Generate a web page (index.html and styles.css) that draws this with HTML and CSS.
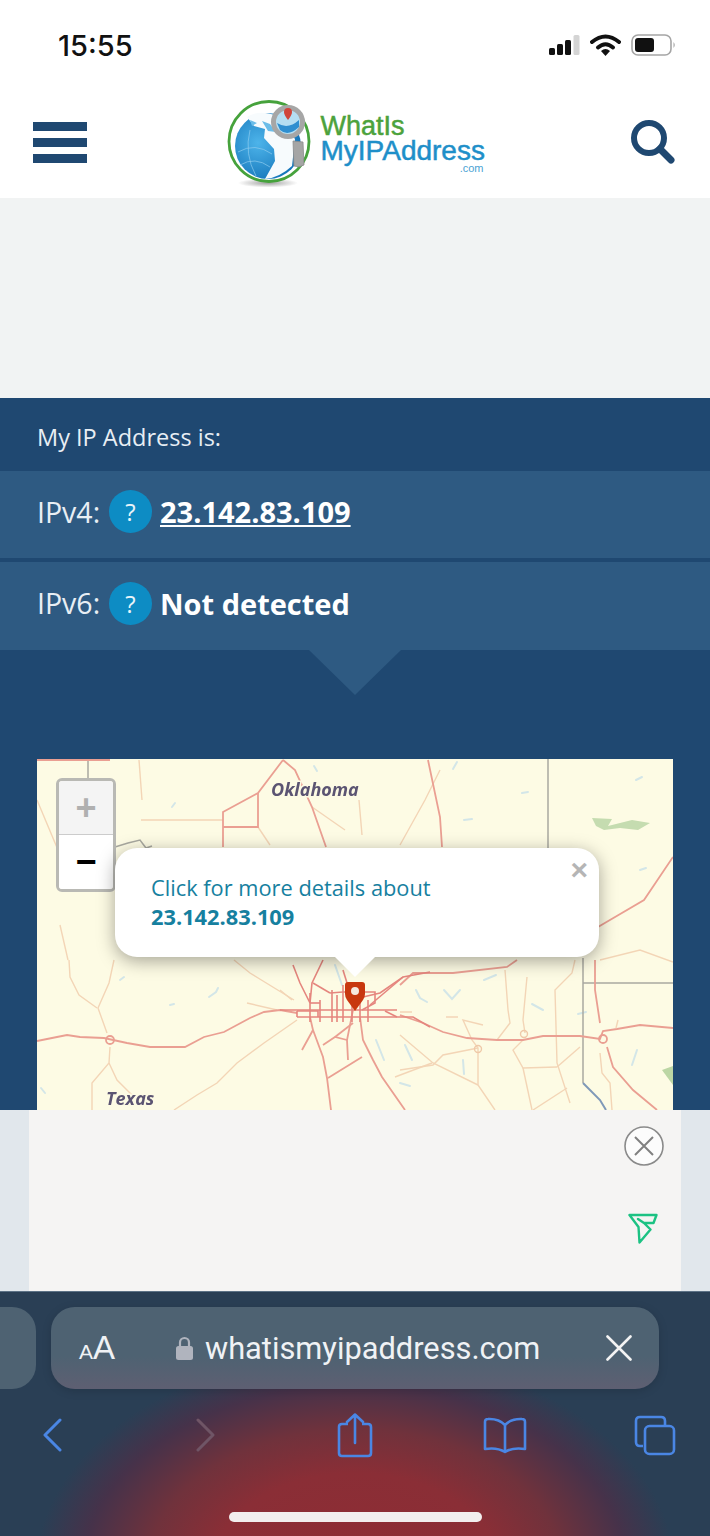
FILE: index.html
```html
<!DOCTYPE html>
<html lang="en">
<head>
  <meta charset="UTF-8" />
  <title>What Is My IP Address</title>
  <link rel="stylesheet" href="styles.css">
</head>
<body>

  <div class="statusbar">
    <div class="clock">15:55</div>
    <div class="status-icons">
      <svg width="32" height="20" viewBox="0 0 32 20">
        <rect x="1" y="13" width="6" height="7" rx="1.5" fill="#111"/>
        <rect x="9" y="9" width="6" height="11" rx="1.5" fill="#111"/>
        <rect x="17" y="5" width="6" height="15" rx="1.5" fill="#111"/>
        <rect x="25.5" y="0" width="6" height="20" rx="1.5" fill="#d4d4d4"/>
      </svg>
      <svg width="31" height="22" viewBox="0 0 31 22">
        <path d="M2 8 Q15.5 -3 29 8" fill="none" stroke="#111" stroke-width="4" stroke-linecap="round"/>
        <path d="M8 13.5 Q15.5 7 23 13.5" fill="none" stroke="#111" stroke-width="4" stroke-linecap="round"/>
        <path d="M11 17 L15.5 22 L20 17 Q15.5 13 11 17 Z" fill="#111"/>
      </svg>
      <svg width="46" height="22" viewBox="0 0 46 22">
        <rect x="1" y="1" width="39" height="20" rx="6" fill="#fff" stroke="#a5a5a5" stroke-width="1.6"/>
        <rect x="4" y="4" width="19" height="14" rx="3" fill="#111"/>
        <path d="M42.5 8 Q45 11 42.5 14 Z" fill="#a5a5a5"/>
      </svg>
    </div>
  </div>

  <div class="appbar">
    <div class="burger"><span></span><span></span><span></span></div>
    <div class="logo">
      <svg class="logo-mark" width="88" height="92" viewBox="226 96 88 92">
        <defs>
          <radialGradient id="globe" cx="35%" cy="45%" r="70%">
            <stop offset="0" stop-color="#4db4ea"/>
            <stop offset="1" stop-color="#0f6fb5"/>
          </radialGradient>
          <radialGradient id="shade">
            <stop offset="0" stop-color="#777" stop-opacity=".7"/>
            <stop offset="1" stop-color="#777" stop-opacity="0"/>
          </radialGradient>
        </defs>
        <ellipse cx="268" cy="181" rx="30" ry="4.5" fill="url(#shade)"/>
        <ellipse cx="269" cy="139.5" rx="40" ry="40" fill="#fff" stroke="#46a23c" stroke-width="2.8"/>
        <circle cx="268" cy="144" r="33" fill="url(#globe)"/>
        <path d="M247 115 Q259 107 277 114 L295 137 L292 164 Q279 176 265 177 L275 159 L274 147 L264 136 L265 127 L254 124 Z" fill="#f7fbfd"/>
        <path d="M262 119 L270 122 L276 130 L268 129 Z M250 118 L257 121 L252 124 Z" fill="#6bbde9"/>
        <g fill="none" stroke="#8ccbef" stroke-width=".7">
          <path d="M238 150 Q255 140 272 152"/>
          <path d="M240 163 Q255 154 270 165"/>
          <path d="M250 128 Q244 152 256 174"/>
        </g>
        <path d="M293 139 L303 140 L304 163 Q299 166 294 164 Z" fill="#a5a5a5" stroke="#8c8c8c" stroke-width=".8"/>
        <circle cx="288" cy="120" r="14.5" fill="#b5def2" stroke="#a6a6a6" stroke-width="5"/>
        <path d="M277 121 Q288 128 299 118 L299 125 Q288 135 280 128 Z" fill="#2f8fd0"/>
        <path d="M288 106 a4 4 0 0 1 4 4 q0 3 -4 8 q-4 -5 -4 -8 a4 4 0 0 1 4 -4 Z" fill="#d0453a"/>
      </svg>
      <div class="logo-text">
        <div class="logo-what">WhatIs</div>
        <div class="logo-my">MyIPAddress</div>
        <div class="logo-com">.com</div>
      </div>
    </div>
    <svg class="search" width="46" height="46" viewBox="0 0 46 46">
      <circle cx="19" cy="19" r="15" fill="none" stroke="#1f4871" stroke-width="6"/>
      <path d="M30 30 L41 41" stroke="#1f4871" stroke-width="7" stroke-linecap="round"/>
    </svg>
  </div>

  <div class="ad-top"></div>

  <div class="hero">
    <div class="hero-title">My IP Address is:</div>
    <div class="ip-row">
      <span class="ip-label">IPv4:</span>
      <span class="help">?</span>
      <a class="ip-value" href="#">23.142.83.109</a>
    </div>
    <div class="ip-row">
      <span class="ip-label">IPv6:</span>
      <span class="help">?</span>
      <span class="ip-value">Not detected</span>
    </div>
    <div class="arrow"></div>

    <div class="map">
      <svg class="map-art" width="636" height="351" viewBox="37 759 636 351">
        <!-- water -->
        <g fill="none" stroke="#d3e6e8" stroke-width="2" stroke-linecap="round">
          <path d="M172 807 L175 803"/>
          <path d="M464 820 L472 819"/>
          <path d="M522 793 L528 792"/>
          <path d="M314 766 L317 771"/>
          <path d="M453 769 L457 762"/>
          <path d="M120 980 L124 977"/>
          <path d="M170 1005 L174 1004"/>
          <path d="M209 997 L216 992 L218 988"/>
          <path d="M41 1088 L45 1093"/>
          <path d="M416 990 L420 998 L427 1002"/>
          <path d="M444 990 L452 999 L460 990"/>
          <path d="M532 1004 L543 1010"/>
          <path d="M578 1014 L586 1012"/>
          <path d="M463 1060 L464 1074"/>
          <path d="M405 1045 L412 1060"/>
          <path d="M400 1083 L410 1086"/>
          <path d="M484 980 L496 975"/>
          <path d="M637 1050 L632 1065"/>
          <path d="M335 965 L342 985"/>
          <path d="M376 1040 L384 1060"/>
          <path d="M640 870 L646 868"/>
          <path d="M636 780 L642 777"/>
        </g>
        <!-- green patches -->
        <path d="M592 818 L612 819 L608 826 L620 823 L632 820 L650 823 L638 830 L620 828 L604 830 L596 826 Z" fill="#c5dcb0"/>
        <path d="M662 1070 L673 1066 V1085 Z" fill="#bcd6a4"/>
        <!-- state lines -->
        <g fill="none" stroke="#a9a9a0" stroke-width="1.5">
          <path d="M548 759 V848"/>
          <path d="M88 759 V782"/>
          <path d="M583 958 V1083"/>
          <path d="M583 983 H673"/>
          <path d="M115 847 L128 843 L140 840 L146 848 L152 846"/>
        </g>
        <path d="M583 1083 L600 1100 L606 1110" fill="none" stroke="#7f99b8" stroke-width="2"/>
        <!-- small roads -->
        <g fill="none" stroke="#f3d5b6" stroke-width="1.4">
          <path d="M139 760 L142 800"/>
          <path d="M141 820 H223"/>
          <path d="M37 800 L58 850"/>
          <path d="M60 925 L68 960"/>
          <path d="M69 960 L70 977 L79 995 L97 1008"/>
          <path d="M114 960 L109 983 L98 1008 L107 1033"/>
          <path d="M110 1047 L109 1063 L92 1083 V1110"/>
          <path d="M109 1063 L117 1080 L134 1097"/>
          <path d="M174 1110 L197 1095 L217 1083 L237 1063 L264 1043 L297 1020"/>
          <path d="M247 1003 L277 1010"/>
          <path d="M234 960 L250 973 L294 1000"/>
          <path d="M258 827 L270 845"/>
          <path d="M312 807 L345 830"/>
          <path d="M359 800 L362 835"/>
          <path d="M400 845 L425 800 L440 770"/>
          <path d="M505 970 L508 1010 L510 1023 L497 1040"/>
          <path d="M527 977 L523 1020 L525 1033"/>
          <path d="M575 960 L572 973 L555 990 L557 1063 L570 1103"/>
          <path d="M557 1067 L523 1068 L513 1050 L523 1040"/>
          <path d="M523 1068 L532 1110"/>
          <path d="M567 1088 L533 1110"/>
          <path d="M580 1047 L557 1067"/>
          <path d="M600 1053 L602 1073 L610 1083 L612 1110"/>
          <path d="M483 1025 L463 1020 L472 1040 L478 1048 V1085 L495 1110"/>
          <path d="M400 1035 L433 1063 L478 1085"/>
          <path d="M400 1070 L433 1065 L443 1055 L478 1048"/>
          <path d="M395 1077 L432 1063"/>
          <path d="M400 1012 H412 M446 1017 H458"/>
          <path d="M600 960 L640 950 L673 962"/>
          <path d="M618 1020 L616 1028"/>
          <path d="M280 990 L292 1000"/>
        </g>
        <circle cx="478" cy="1049" r="3.5" fill="none" stroke="#efc9a8" stroke-width="1.4"/>
        <circle cx="524" cy="1034" r="3.5" fill="none" stroke="#efc9a8" stroke-width="1.4"/>
        <!-- main roads -->
        <g fill="none" stroke="#ea9f92" stroke-width="1.8">
          <path d="M37 1041 L57 1037 L67 1035 L80 1037 L104 1038 L127 1043 L150 1047 L185 1047 L204 1037 L224 1032 L250 1018 L264 1012 L280 1010 L297 1013"/>
          <path d="M400 1015 L423 1023 L443 1032 L467 1038 L497 1040 L523 1040 L543 1036 L580 1036 L600 1039 L603 1031 L617 1029 L640 1025 L673 1028"/>
          <path d="M283 760 L295 770 L312 807 L326 847"/>
          <path d="M428 760 L440 817 L442 847"/>
          <path d="M223 847 V812 L258 793 L283 760"/>
          <path d="M223 827 H258 V793"/>
          <path d="M673 857 L644 900 L598 927"/>
          <path d="M37 760 H110"/>
          <path d="M595 960 V990 L600 1023"/>
          <path d="M607 1047 L613 1067 L633 1090 L657 1110"/>
          <path d="M400 985 L413 973 L453 973 L507 967 L517 960"/>
          <circle cx="110" cy="1040" r="4"/>
          <circle cx="603" cy="1039" r="4"/>
          <path d="M313 1030 L323 1057 L327 1078 L331 1110"/>
          <path d="M328 1078 L362 1057"/>
          <path d="M360 1017 L363 1040 L373 1060 L382 1077 L405 1110"/>
          <path d="M353 1010 L347 1040 L348 1060"/>
          <path d="M310 1017 L313 1030 L302 1050"/>
          <path d="M335 1037 L353 1023"/>
          <path d="M323 1045 L335 1037 L347 1040"/>
        </g>
        <!-- city -->
        <g fill="none" stroke="#e5867e" stroke-width="1.6">
          <path d="M280 1010 L297 1010 H397 M297 1017 H397 L413 1017 L430 1027"/>
          <path d="M310 993 V1022 M320 1000 V1022 M332 990 V1022 M337 995 V1022 M343 985 V1022 M352 990 V1022 M360 995 V1022 M368 1000 V1022"/>
          <path d="M297 1011 V1017 M297 1011 H318 V1017"/>
          <path d="M310 1003 H320"/>
          <path d="M330 993 L343 992 H367 L375 992 V1003 L362 1010"/>
          <path d="M323 960 L312 983 L310 1003"/>
          <path d="M293 965 L300 983 L310 1003"/>
          <path d="M313 983 L330 993"/>
          <path d="M343 970 L347 983"/>
          <path d="M363 997 L380 993 L403 977 L430 972"/>
          <path d="M370 1005 L403 977"/>
          <path d="M385 1011 L397 1017"/>
        </g>
        <g class="map-label">
          <text x="271" y="796">Oklahoma</text>
          <text x="106" y="1105">Texas</text>
        </g>
      </svg>

      <div class="zoom">
        <div class="zoom-btn zoom-in">+</div>
        <div class="zoom-btn zoom-out">&minus;</div>
      </div>

      <div class="popup">
        <div class="popup-close">&times;</div>
        <div>Click for more details about</div>
        <div class="popup-ip">23.142.83.109</div>
      </div>

      <svg class="pin" width="20" height="29" viewBox="0 0 20 29">
        <path d="M3 0 H17 Q20 0 20 3 V12 Q20 15 18 18 L10 29 L2 18 Q0 15 0 12 V3 Q0 0 3 0 Z" fill="#c8380f"/>
        <circle cx="10" cy="9" r="4" fill="#f6e9df"/>
      </svg>
    </div>
  </div>

  <div class="ad-bottom">
    <div class="ad-inner">
      <svg class="ad-close" width="40" height="40" viewBox="0 0 40 40">
        <circle cx="20" cy="20" r="19" fill="#fcfcfc" stroke="#8a8a8a" stroke-width="1.6"/>
        <path d="M11 11 L29 29 M29 11 L11 29" stroke="#808080" stroke-width="2"/>
      </svg>
      <svg class="ad-mark" width="30" height="31" viewBox="0 0 30 31">
        <path d="M1.5 2 H28.5 L25.5 10 H16 L22.5 16.5 L11.5 29.5 L10.5 14 Z M10 6 L16 10" fill="none" stroke="#1cc283" stroke-width="2.4" stroke-linejoin="round" stroke-linecap="round"/>
      </svg>
    </div>
  </div>

  <div class="safari">
    <div class="tabs-row">
      <div class="pill-side"></div>
      <div class="pill">
        <div class="aa"><span class="aa-small">A</span>A</div>
        <svg class="lock" width="17" height="24" viewBox="0 0 17 24">
          <path d="M4 11 V6.5 a4.5 4.5 0 0 1 9 0 V11" fill="none" stroke="#b0b4be" stroke-width="2.2"/>
          <rect x="0" y="10" width="17" height="14" rx="2.5" fill="#b0b4be"/>
        </svg>
        <div class="url">whatismyipaddress.com</div>
        <svg class="stop" width="26" height="26" viewBox="0 0 26 26">
          <path d="M1.5 1.5 L24.5 24.5 M24.5 1.5 L1.5 24.5" stroke="#f3f3f3" stroke-width="2.6" stroke-linecap="round"/>
        </svg>
      </div>
    </div>
    <div class="toolbar">
      <svg width="20" height="34" viewBox="0 0 20 34">
        <path d="M18 2 L3 17 L18 32" fill="none" stroke="#4a86e4" stroke-width="3" stroke-linecap="round" stroke-linejoin="round"/>
      </svg>
      <svg width="20" height="34" viewBox="0 0 20 34">
        <path d="M2 2 L17 17 L2 32" fill="none" stroke="#6f5566" stroke-width="3" stroke-linecap="round" stroke-linejoin="round"/>
      </svg>
      <svg width="36" height="45" viewBox="0 0 36 45">
        <path d="M11 11 H5 Q2 11 2 14 V40 Q2 43 5 43 H31 Q34 43 34 40 V14 Q34 11 31 11 H25" fill="none" stroke="#4a86e4" stroke-width="2.6"/>
        <path d="M18 30 V2 M10 9 L18 1.5 L26 9" fill="none" stroke="#4a86e4" stroke-width="2.6" stroke-linecap="round" stroke-linejoin="round"/>
      </svg>
      <svg width="44" height="37" viewBox="0 0 44 37">
        <path d="M22 8 Q16 1.5 5 2 Q2 2 2 5 V32 Q14 30 22 35 Q30 30 42 32 V5 Q42 2 39 2 Q28 1.5 22 8 Z M22 8 V35" fill="none" stroke="#4a86e4" stroke-width="2.6" stroke-linejoin="round"/>
      </svg>
      <svg width="42" height="41" viewBox="0 0 42 41">
        <path d="M9 31 H6 Q2 31 2 27 V6 Q2 2 6 2 H27 Q31 2 31 6 V10" fill="none" stroke="#4a86e4" stroke-width="2.6"/>
        <rect x="11" y="11" width="29" height="28" rx="4.5" fill="none" stroke="#4a86e4" stroke-width="2.6"/>
      </svg>
    </div>
    <div class="home-bar"></div>
  </div>

</body>
</html>
```

FILE: styles.css
```css
* {
  box-sizing: border-box;
}

body {
  font-family: 'Open Sans', sans-serif;
  background: #fff;
  margin: 0;
  width: 710px;
  height: 1536px;
  overflow: hidden;
}

/* phone status bar */
.statusbar {
  height: 90px;
  display: flex;
  justify-content: space-between;
  align-items: center;
  padding: 0 33px 0 58px;
}

.clock {
  font-family: 'Inter', sans-serif;
  font-weight: 500;
  font-size: 29px;
  color: #111;
}

.status-icons {
  display: flex;
  align-items: center;
  gap: 10px;
}

/* site header */
.appbar {
  height: 108px;
  display: grid;
  grid-template-columns: 1fr auto 1fr;
  align-items: center;
  padding: 0 34px 0 33px;
}

.burger {
  width: 54px;
  display: flex;
  flex-direction: column;
  gap: 7px;
  margin-top: -4px;
}

.burger span {
  height: 9px;
  background: #1f4871;
}

.logo {
  display: flex;
  align-items: flex-start;
  gap: 7px;
}

.logo-text {
  font-family: 'Liberation Sans', sans-serif;
  padding-top: 17px;
  width: 163px;
}

.logo-what {
  font-size: 27px;
  line-height: 22px;
  color: #4ca23c;
  -webkit-text-stroke: 0.5px #4ca23c;
}

.logo-my {
  font-size: 28px;
  line-height: 27px;
  color: #1e8fc9;
  -webkit-text-stroke: 0.5px #1e8fc9;
}

.logo-com {
  font-size: 11px;
  line-height: 9px;
  text-align: right;
  color: #4ba3d4;
}

.search {
  justify-self: end;
  margin-top: -4px;
}

.ad-top {
  height: 200px;
  background: #f1f3f3;
}

/* ip panel */
.hero {
  height: 712px;
  background: #1f4871;
  color: #fff;
  position: relative;
}

.hero-title {
  height: 73px;
  padding: 4px 37px 0;
  display: flex;
  align-items: center;
  font-size: 23.5px;
  color: #e8eef4;
}

.ip-row {
  height: 87px;
  margin-bottom: 4px;
  padding: 0 37px 6px;
  background: #2e5a82;
  display: flex;
  align-items: center;
}

.ip-row + .ip-row {
  margin-bottom: 0;
  height: 88px;
}

.ip-label {
  font-size: 28.5px;
  width: 72px;
  color: #e8eef4;
}

.help {
  width: 43px;
  height: 43px;
  margin-right: 8px;
  border-radius: 50%;
  background: #0d8cc4;
  display: flex;
  align-items: center;
  justify-content: center;
  font-size: 24px;
  color: #e8f4fa;
}

.ip-value {
  font-size: 29px;
  font-weight: 700;
  color: #fff;
}

.arrow {
  width: 0;
  height: 0;
  margin: 0 auto;
  border-left: 46px solid transparent;
  border-right: 46px solid transparent;
  border-top: 45px solid #2e5a82;
}

/* map */
.map {
  position: relative;
  width: 636px;
  height: 351px;
  margin: 64px 37px 0;
  background: #fdfbe4;
  overflow: hidden;
}

.map-art {
  display: block;
  filter: blur(0.6px);
}

.map-label {
  font-family: 'Open Sans', sans-serif;
  font-style: italic;
  font-weight: 700;
  font-size: 18px;
  fill: #5b5472;
  stroke: #fdfbe4;
  stroke-width: 3px;
  paint-order: stroke;
}

.zoom {
  position: absolute;
  left: 19px;
  top: 19px;
  width: 60px;
  border: 3px solid #b9b9b4;
  border-radius: 6px;
  overflow: hidden;
}

.zoom-btn {
  height: 54px;
  display: flex;
  align-items: center;
  justify-content: center;
  font-family: 'Liberation Sans', sans-serif;
  font-weight: 700;
  font-size: 36px;
}

.zoom-in {
  background: #f4f4f4;
  color: #b0b0b0;
  border-bottom: 1px solid #ccc;
}

.zoom-out {
  background: #fff;
  color: #000;
}

.popup {
  position: absolute;
  left: 78px;
  top: 89px;
  width: 484px;
  height: 109px;
  padding: 25px 36px 0;
  background: #fff;
  border-radius: 22px;
  box-shadow: 0 4px 18px rgba(0, 0, 0, 0.35);
  font-size: 21.8px;
  line-height: 29px;
  color: #16809f;
}

.popup::after {
  content: "";
  position: absolute;
  left: 220px;
  top: 109px;
  border-left: 20px solid transparent;
  border-right: 20px solid transparent;
  border-top: 20px solid #fff;
}

.popup-ip {
  font-weight: 700;
}

.popup-close {
  position: absolute;
  right: 11px;
  top: 7px;
  font-family: 'Liberation Sans', sans-serif;
  font-weight: 700;
  font-size: 30px;
  line-height: 30px;
  color: #b5b5b5;
}

.pin {
  position: absolute;
  left: 308px;
  top: 223px;
}

/* fixed bottom ad */
.ad-bottom {
  height: 181px;
  padding: 0 29px;
  background: #e1e7ec;
}

.ad-inner {
  height: 100%;
  padding: 16px 17px 0 0;
  background: #f5f4f3;
  display: flex;
  flex-direction: column;
  align-items: flex-end;
  gap: 47px;
}

.ad-mark {
  margin-right: 6px;
}

/* safari chrome */
.safari {
  height: 245px;
  padding-top: 15px;
  background:
    radial-gradient(ellipse 320px 220px at 50% 1571px, #8f2c33 0%, #8a2e36 45%, #70323c 65%, #46324a 85%, rgba(42, 63, 85, 0) 100%),
    #2a3f55;
  background-position: 0 -1291px, 0 0;
  background-size: 710px 1536px, auto;
  background-repeat: no-repeat;
  border-top: 1px solid #5d7286;
}

.tabs-row {
  display: flex;
  gap: 15px;
  height: 82px;
  margin-left: -20px;
}

.pill-side {
  width: 56px;
  border-radius: 0 24px 24px 0;
  background: #4e6272;
}

.pill {
  width: 608px;
  display: flex;
  align-items: center;
  padding: 0 27px 0 28px;
  border-radius: 24px;
  background: linear-gradient(180deg, #4e6272 0%, #4e6272 60%, #5e5f72 100%);
  box-shadow: 0 2px 10px rgba(0, 0, 0, 0.15);
  color: #f0f2f5;
}

.aa {
  width: 97px;
  font-family: 'Liberation Sans', sans-serif;
  font-size: 33px;
}

.aa-small {
  font-size: 21px;
}

.lock {
  margin-right: 12px;
}

.url {
  flex: 1;
  font-family: 'Roboto', sans-serif;
  font-size: 30.8px;
  white-space: nowrap;
}

.toolbar {
  display: grid;
  grid-template-columns: 154px 154px 143px 158px 142px;
  justify-items: center;
  align-items: center;
  height: 50px;
  margin: 21px 0 0 -25px;
}

.home-bar {
  width: 253px;
  height: 10px;
  margin: 52px auto 0;
  border-radius: 5px;
  background: #f2eeee;
}
```
